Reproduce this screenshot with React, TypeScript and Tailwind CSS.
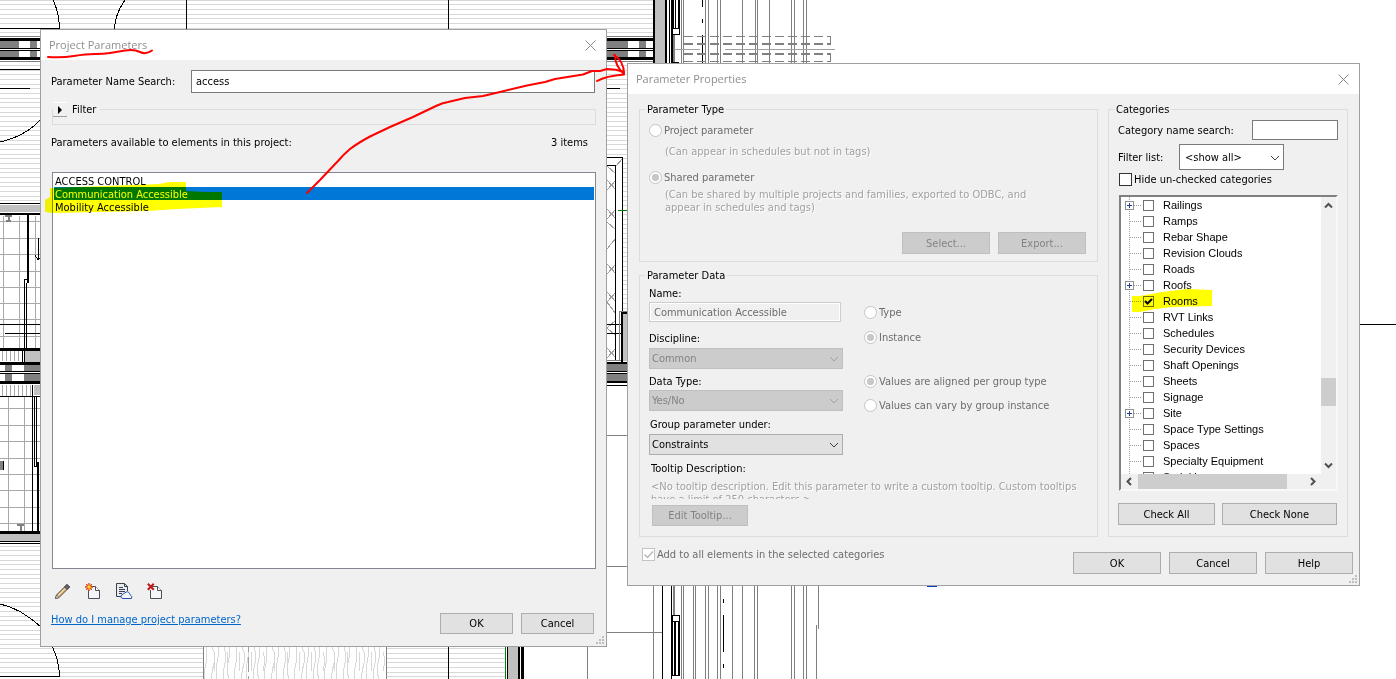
import React, { useState } from 'react';

const ui = 'font-["DejaVu_Sans_Condensed","DejaVu_Sans",sans-serif] text-[11px] leading-[13px] text-black';

const parameters = ['ACCESS CONTROL', 'Communication Accessible', 'Mobility Accessible'];

const categories = [
    { name: 'Railings', expandable: true },
    { name: 'Ramps' },
    { name: 'Rebar Shape' },
    { name: 'Revision Clouds' },
    { name: 'Roads' },
    { name: 'Roofs', expandable: true },
    { name: 'Rooms' },
    { name: 'RVT Links' },
    { name: 'Schedules' },
    { name: 'Security Devices' },
    { name: 'Shaft Openings' },
    { name: 'Sheets' },
    { name: 'Signage' },
    { name: 'Site', expandable: true },
    { name: 'Space Type Settings' },
    { name: 'Spaces' },
    { name: 'Specialty Equipment' },
    { name: 'Sprinklers' },
];

// evenly spaced board lines, 14px per three boards
const boards = (x1: number, x2: number, y1: number, y2: number) => {
    let d = '';
    for (let i = 0; i < 150; i++) {
        const y = Math.floor((i * 14) / 3);
        if (y >= y1 && y < y2) d += `M${x1} ${y}.5H${x2}`;
    }
    return d;
};

const vLines = (xs: number[], y1: number, y2: number) => xs.map(x => `M${x}.5 ${y1}V${y2}`).join('');
const hLines = (ys: number[], x1: number, x2: number) => ys.map(y => `M${x1} ${y}.5H${x2}`).join('');

const woodGrain = () => {
    let d = '';
    for (let x = 206; x < 384; x += 6) {
        const k = (x * 7) % 5;
        d += `M${x} 647q${k} 8 ${k - 2} 16t${1 - k} 16`;
        if (x % 4 === 0) d += `M${x + 3} 652q${3 - k} 8 0 19`;
    }
    return d;
};

const FloorPlan: React.FC = () => (
    <svg className="absolute inset-0 h-full w-full" shapeRendering="crispEdges" fill="none" aria-hidden="true">
        <g stroke="#d8d8d8">
            <path d={boards(0, 653, 0, 36)} />
            <path d={boards(0, 41, 63, 202)} />
            <path d={boards(607, 628, 63, 157)} />
            <path d={boards(623, 628, 157, 312)} />
            <path d={boards(0, 203, 545, 679)} />
            <path d={boards(387, 505, 646, 679)} />
            <path d={woodGrain()} />
        </g>
        <g stroke="#000">
            <path d="M53 0Q59 12 59.500 28M0 28.500H60M125 0Q115 14 114.500 29M186.500 0V29M448.500 0V29" />
            <path d="M0 69.500H41M0 88.500H30M607 88.500H620M0 142Q26 136 41 119" />
            <path d="M0 604Q20 608 41 627M52 646Q59 660 59.500 676M0 676.500H60M448.500 646V679" />
            <path d="M1360 324.500H1396" />
        </g>

        {/* upper wall */}
        <path d="M0 36.500H41M0 61.500H41M607 36.500H653M607 61.500H653" stroke="#808080" />
        <path d="M0 38h41v3H0zM0 57h41v3H0zM607 38h46v3h-46zM607 57h46v3h-46zM0 48h41v1H0zM0 50h41v1H0zM607 48h46v1h-46zM607 50h46v1h-46z" fill="#000" />
        <path d="M0 41h19v7H0zM0 51h19v6H0zM30 41h7v7h-7zM30 51h7v6h-7zM607 41h21v7h-21zM607 51h21v6h-21zM639 41h7v7h-7zM639 51h7v6h-7z" fill="#808080" />

        {/* tiled rooms */}
        <path d={hLines([221, 238, 254, 271, 287, 303, 319, 336], 0, 41) + vLines([3, 19, 35], 216, 348)} stroke="#a8a8a8" />
        <path d={hLines([408, 425, 441, 458, 474, 490, 507, 523], 0, 41) + vLines([8, 24], 397, 531)} stroke="#a8a8a8" />
        <path d="M0 205h41v7H0zM25 351h16v11H25zM34 385h7v10h-7zM0 534h41v7H0z" fill="#c0c0c0" />
        <path d="M0 203h41v1H0zM0 213h41v2H0zM27 215h2v68h-2zM0 348h41v3H0zM0 362h41v3H0zM0 371h41v1H0zM0 373h41v1H0zM0 381h41v3H0zM37 462h2v69h-2zM0 531h41v3H0zM0 541h41v1H0zM0 543h41v1H0z" fill="#000" />
        <path d="M5 365h7v6H5zM24 365h17v6H24zM5 374h7v7H5zM24 374h17v7H24zM0 461h4v9H0z" fill="#808080" />
        <path d={vLines([2, 6, 10, 14, 18], 351, 361) + vLines([2, 6, 10, 14, 18, 22, 26, 30], 385, 396)} stroke="#a8a8a8" />
        <path d="M24.500 348V279.500H27.500M26.500 283V348M22.500 351V362M24.500 351V362M32.500 385V531M34.500 396V466H36.500V396M0 396.500H41M0 324.500H41M5 333.500H41M38.500 238V260M35 255l3 5 3-3M3.500 461V470" stroke="#000" />
        <path d="M5 215.500H12M8.500 215V220M6 220.500H11M17 524.500H24M20.500 525V531" stroke="#808080" strokeWidth="2" />

        {/* shaft beside the dialogs */}
        <path d="M607 166l9 8M607 180l9 10 M616 180l-9 10M607 209l9 10M616 209l-9 10M607 222l9 8M616 238l-9 11M607 264l9 10M616 264l-9 10M607 292l9 10M616 292l-9 10M607 302l9 12M616 320l-9 8M607 348l9 10M616 348l-9 10M616 166l7-8M607 328l9 8" stroke="#a0a0a0" />
        <path d="M607 157.500H622.500V312M607 165.500H615.500V360M607 324.500H628M607 333.500H628" stroke="#000" />
        <path d="M618 210.500H628" stroke="#008000" />
        <path d="M623 314h5v47h-5z" fill="#c0c0c0" />
        <path d="M619.500 361V311.500H628M607 360.500H621" stroke="#808080" />
        <path d="M621 312h2v50h-2zM621 312h7v2h-7zM607 362h21v2h-21zM607 371h21v1h-21zM607 373h21v1h-21zM607 381h21v2h-21zM607 385h21v1h-21z" fill="#000" />
        <path d="M607 364h21v7h-21zM607 374h21v7h-21z" fill="#808080" />
        <path d="M607 435.500H628M607 566.500H628M607 632.500H662M587.500 646V679" stroke="#808080" />

        {/* exterior wall, top */}
        <path d="M655 0h10v64h-10z" fill="#c0c0c0" />
        <path d="M653 0h2v64h-2zM665 0h2v64h-2zM671 0h2v64h-2zM673 0h1v28h-1zM678 0h2v28h-2zM675 0h1v28h-1z" fill="#000" />
        <path d="M669.500 0V64M672.500 28.500H679.500V34.500H672.500zM672 62.500H679" stroke="#000" />
        <path d="M673 35h2v27h-2z" fill="#808080" />
        <path d={vLines([681, 683, 705, 708, 717, 720, 742, 755, 757, 769, 791, 794, 803, 806], 0, 64)} stroke="#808080" />
        <path d="M702.500 0V7M702.500 19V23M702.500 35V64" stroke="#000" />
        <path d="M684 36.500H831M684 61.500H831" stroke="#808080" strokeDasharray="9 4" />
        <path d="M684 44H831M684 54H831" stroke="#808080" strokeWidth="2" strokeDasharray="9 4" />
        <path d="M830.500 36V45M830.500 53V62" stroke="#808080" />
        <path d="M674 49.500H700M725 49.500H835" stroke="#a0a0a0" />

        {/* exterior wall, bottom */}
        <path d="M508 646h10v33h-10z" fill="#c0c0c0" />
        <path d="M507 646h1v33h-1zM518 646h2v33h-2zM521 646h3v33h-3z" fill="#000" />
        <path d="M505.500 646V679" stroke="#008000" />
        <path d={vLines([653, 681, 683, 693, 695, 705, 708, 717, 720, 732, 742, 754, 757, 791, 794, 803, 806], 585, 679)} stroke="#808080" />
        <path d="M818.500 585V629M816.500 625V679M386.500 646V679M203.500 646V679" stroke="#808080" />
        <path d="M248.500 646V652M248.500 657V672M248.500 676V679" stroke="#a0a0a0" />
        <path d="M662.500 585V679M671.500 585V679M723.500 599V603M723.500 615V652M723.500 664V668" stroke="#000" />
        <path d="M673 585h2v30h-2z" fill="#808080" />
        <path d="M672.500 615.500H679.500V621.500H672.500zM672 675.500H680" stroke="#000" />
        <path d="M672 621h1v54h-1zM674 621h2v54h-2zM678 621h2v54h-2z" fill="#000" />
        <path d="M920 585.500H944M927 586.500H937" stroke="#0040c0" />
    </svg>
);

const Chevron: React.FC<{ className?: string }> = ({ className }) => (
    <svg viewBox="0 0 10 6" className={className} fill="none" stroke="currentColor" aria-hidden="true">
        <path d="M1 1l4 4 4-4" />
    </svg>
);

const ScrollArrow: React.FC<{ d: string }> = ({ d }) => (
    <svg viewBox="0 0 9 9" className="h-[9px] w-[9px]" fill="none" stroke="#505050" strokeWidth="2" aria-hidden="true">
        <path d={d} />
    </svg>
);

const PushButton: React.FC<React.ButtonHTMLAttributes<HTMLButtonElement>> = ({ className = '', ...rest }) => (
    <button
        type="button"
        className={`border border-[#adadad] bg-[#e1e1e1] text-center disabled:border-[#bfbfbf] disabled:bg-[#cccccc] disabled:text-[#838383] ${className}`}
        {...rest}
    />
);

const RadioOption: React.FC<{ name: string; label: string; checked?: boolean }> = ({ name, label, checked }) => (
    <label className="flex h-4 items-center gap-[2px] text-[#6d6d6d]">
        <input
            type="radio"
            name={name}
            defaultChecked={checked}
            disabled
            className="h-[13px] w-[13px] appearance-none rounded-full border border-[#c4c4c4] bg-white checked:bg-[radial-gradient(circle_closest-side,#c8c8c8_62%,#fff_72%)]"
        />
        {label}
    </label>
);

const Combo: React.FC<{ id: string; value: string; disabled?: boolean }> = ({ id, value, disabled }) => (
    <div className="relative w-[194px]">
        <select
            id={id}
            disabled={disabled}
            className="block h-[21px] w-full appearance-none border border-[#adadad] bg-[#e1e1e1] pl-[2px] opacity-100 disabled:border-[#bfbfbf] disabled:bg-[#cccccc] disabled:text-[#838383]"
        >
            <option>{value}</option>
        </select>
        <Chevron className={`pointer-events-none absolute top-2 right-1 h-[6px] w-[10px] ${disabled ? 'text-[#a0a0a0]' : 'text-[#404040]'}`} />
    </div>
);

const SizeGrip: React.FC = () => (
    <svg viewBox="0 0 8 8" className="absolute right-[2px] bottom-[2px] h-2 w-2" fill="#bfbfbf" shapeRendering="crispEdges" aria-hidden="true">
        <path d="M6 0h2v2H6zM3 3h2v2H3zM6 3h2v2H6zM0 6h2v2H0zM3 6h2v2H3zM6 6h2v2H6z" />
    </svg>
);

const TitleBar: React.FC<{ title: string }> = ({ title }) => (
    <header className="flex h-[30px] items-center justify-between bg-white pr-[10px] pl-2">
        <h1 className='font-["Open_Sans",sans-serif] text-[11px] leading-4 text-[#8f8f8f]'>{title}</h1>
        <button type="button" aria-label="Close">
            <svg viewBox="0 0 11 11" className="block h-[11px] w-[11px]" stroke="#8c8c8c" fill="none">
                <path d="M.5.5l10 10M10.500.5l-10 10" />
            </svg>
        </button>
    </header>
);

const PageOutline = () => (
    <>
        <path d="M4.500 3.500H10.500L14.500 7.500V15.500H3.500V7" fill="#f4f5f8" stroke="#4a4f58" />
        <path d="M10.500 3.500V7.500H14.500" fill="#fff" stroke="#4a4f58" />
    </>
);

const ProjectParameters: React.FC = () => {
    const [selected, setSelected] = useState('Communication Accessible');

    return (
        <section className="absolute top-[29px] left-[40px] w-[567px] border border-[#a0a0a0] bg-[#f0f0f0]">
            <TitleBar title="Project Parameters" />
            <div className="px-[10px] pt-[10px] pb-3">
                <div className="flex items-center">
                    <label htmlFor="param-search" className="w-[140px]">Parameter Name Search:</label>
                    <input id="param-search" defaultValue="access" className="mr-px h-[23px] min-w-0 flex-1 border border-[#7a7a7a] bg-white px-1" />
                </div>

                <fieldset className="mt-[9px] ml-px h-[23px] border border-[#dcdcdc]">
                    <legend className="flex h-[15px] items-center gap-[5px] pr-1">
                        <button type="button" aria-label="Expand filter" className="flex h-[15px] w-[14px] items-center justify-center border-t border-b border-t-white border-b-[#a0a0a0]">
                            <svg viewBox="0 0 4 8" className="h-2 w-1"><path d="M0 0l4 4-4 4z" /></svg>
                        </button>
                        Filter
                    </legend>
                </fieldset>

                <div className="mt-[9px] flex h-4 items-center justify-between pr-2">
                    <span>Parameters available to elements in this project:</span>
                    <span>3 items</span>
                </div>

                <ul role="listbox" className="mt-[22px] ml-px h-[397px] border border-[#828790] bg-white p-px leading-[15px]">
                    {parameters.map(name => (
                        <li
                            key={name}
                            role="option"
                            aria-selected={name === selected}
                            onClick={() => setSelected(name)}
                            className={`h-[13px] pl-px ${name === selected ? 'bg-[#0078d7] text-white' : ''}`}
                        >
                            {name}
                        </li>
                    ))}
                </ul>

                <div className="mt-[13px] ml-[3px] flex h-[18px] gap-[14px]">
                    <button type="button" aria-label="Edit parameter">
                        <svg viewBox="0 0 17 17" className="h-[17px] w-[17px]">
                            <path d="M1.500 15.500l1-3.500L13 1.500l2.500 2.500L5 14.500z" fill="#dcb878" stroke="#4a4038" />
                            <path d="M13 1.500l2.500 2.500-2.500 2.500-2.500-2.500z" fill="#75646a" stroke="#44445a" />
                            <path d="M4 12.500L11 5.500" stroke="#fff0c8" />
                            <path d="M1.500 15.500l1-3.500 2.500 2.500z" fill="#f4f4f4" stroke="#5a5a5a" strokeWidth=".8" />
                        </svg>
                    </button>
                    <button type="button" aria-label="New parameter">
                        <svg viewBox="0 0 17 17" className="h-[17px] w-[17px]">
                            <PageOutline />
                            <path d="M4 0v8M0 4h8M1.200 1.200l5.600 5.600M6.800 1.200L1.200 6.800" stroke="#d84010" strokeWidth="1.300" />
                            <circle cx="4" cy="4" r="1.800" fill="#ffd820" />
                        </svg>
                    </button>
                    <button type="button" aria-label="Shared parameter">
                        <svg viewBox="0 0 17 17" className="h-[17px] w-[17px]">
                            <path d="M6 13.500H.5V.5H8.500L11.500 3.500V8" fill="#e8ebf0" stroke="#3c424c" />
                            <path d="M8.500.5V3.500H11.500M3 4.500H7M3 6.500H9M3 8.500H9M3 10.500H6" stroke="#3c424c" fill="none" />
                            <path d="M7 15.500a2 2 0 0 1 0-4 2 2 0 0 1 2-1.500 2.500 2.500 0 0 1 4.500.5q.5 1.500 1.500 2 1.500 1 .5 3z" fill="#f4f8ff" stroke="#2850c0" />
                        </svg>
                    </button>
                    <button type="button" aria-label="Delete parameter">
                        <svg viewBox="0 0 17 17" className="h-[17px] w-[17px]">
                            <PageOutline />
                            <path d="M.8.8l6 6M6.800.8l-6 6" stroke="#c01818" strokeWidth="2" />
                        </svg>
                    </button>
                </div>

                <footer className="mt-[13px] flex items-start justify-between pr-[2px]">
                    <a href="#help" className="text-[#0066cc] underline">How do I manage project parameters?</a>
                    <div className="flex gap-2">
                        <PushButton className="h-[21px] w-[73px]">OK</PushButton>
                        <PushButton className="h-[21px] w-[73px]">Cancel</PushButton>
                    </div>
                </footer>
            </div>
            <SizeGrip />
        </section>
    );
};

const CategoryTree: React.FC = () => {
    const [checked, setChecked] = useState<string[]>(['Rooms']);

    const toggle = (name: string) => {
        setChecked(list => (list.includes(name) ? list.filter(n => n !== name) : [...list, name]));
    };

    return (
        <div className="mt-[7px] flex h-[296px] flex-col border-2 border-t-[#808080] border-r-[#f8f8f8] border-b-[#f8f8f8] border-l-[#808080] bg-white">
            <div className="flex min-h-0 flex-1">
                <ul className='flex-1 overflow-hidden font-["Liberation_Sans",sans-serif]'>
                    {categories.map(({ name, expandable }) => (
                        <li key={name} className="flex h-4 items-center">
                            <span className="ml-1 flex h-4 w-[9px] items-center justify-center bg-[repeating-linear-gradient(180deg,#a0a0a0_0_1px,transparent_1px_2px)] bg-[length:1px_100%] bg-[position:4px_0] bg-no-repeat">
                                {expandable && (
                                    <button type="button" aria-label={`Expand ${name}`} className="h-[9px] w-[9px] bg-white">
                                        <svg viewBox="0 0 9 9" className="block h-[9px] w-[9px]" fill="none" shapeRendering="crispEdges">
                                            <path d="M.5.5h8v8h-8z" stroke="#919191" />
                                            <path d="M2 4.500h5M4.500 2v5" stroke="#2040a0" />
                                        </svg>
                                    </button>
                                )}
                            </span>
                            <span className={`h-px bg-[repeating-linear-gradient(90deg,#a0a0a0_0_1px,transparent_1px_2px)] ${expandable ? 'w-[7px]' : '-ml-1 w-[11px]'}`} />
                            <label className="ml-[2px] flex items-center gap-[9px] whitespace-nowrap">
                                <span className="grid">
                                    <input
                                        type="checkbox"
                                        checked={checked.includes(name)}
                                        onChange={() => toggle(name)}
                                        className="peer col-start-1 row-start-1 h-[11px] w-[11px] appearance-none border border-[#707070] bg-white"
                                    />
                                    <svg viewBox="0 0 11 11" className="pointer-events-none invisible col-start-1 row-start-1 h-[11px] w-[11px] peer-checked:visible" fill="none" stroke="#000" strokeWidth="2">
                                        <path d="M2 5l2.500 2.500L9 3" />
                                    </svg>
                                </span>
                                {name}
                            </label>
                        </li>
                    ))}
                </ul>
                <div className="flex w-[15px] flex-col items-center bg-[#f0f0f0]">
                    <button type="button" aria-label="Scroll up" className="flex h-[17px] items-center"><ScrollArrow d="M1 6.500l3.500-3.500L8 6.500" /></button>
                    <div className="mt-[164px] h-7 w-full bg-[#cdcdcd]" />
                    <button type="button" aria-label="Scroll down" className="mt-auto flex h-[17px] items-center"><ScrollArrow d="M1 2.500l3.500 3.500L8 2.500" /></button>
                </div>
            </div>
            <div className="flex h-[15px] items-center bg-[#f0f0f0]">
                <button type="button" aria-label="Scroll left" className="flex w-[17px] justify-center"><ScrollArrow d="M6 1L2.500 4.500 6 8" /></button>
                <div className="h-full w-[149px] bg-[#cdcdcd]" />
                <button type="button" aria-label="Scroll right" className="mr-[15px] ml-auto flex w-[17px] justify-center"><ScrollArrow d="M3 1l3.500 3.500L3 8" /></button>
            </div>
        </div>
    );
};

const ParameterProperties: React.FC = () => (
    <section className="absolute top-[63px] left-[627px] w-[733px] border border-[#a0a0a0] bg-[#f0f0f0]">
        <TitleBar title="Parameter Properties" />
        <div className="flex gap-[10px] px-[11px] pt-2">
            <div className="min-w-0 flex-1">
                <fieldset className="border border-[#dcdcdc] pr-[11px] pb-[7px] pl-[9px]">
                    <legend className="-ml-1 h-[14px] px-[2px] leading-[15px]">Parameter Type</legend>
                    <div className="pt-[6px]">
                        <RadioOption name="kind" label="Project parameter" />
                        <p className="mt-[6px] ml-4 h-[14px] leading-[15px] text-[#a0a0a0] [text-shadow:1px_1px_0_#fff]">(Can appear in schedules but not in tags)</p>
                    </div>
                    <div className="pt-[11px]">
                        <RadioOption name="kind" label="Shared parameter" checked />
                        <p className="mt-[3px] ml-4 w-[380px] text-[#a0a0a0] [text-shadow:1px_1px_0_#fff]">
                            (Can be shared by multiple projects and families, exported to ODBC, and appear in schedules and tags)
                        </p>
                    </div>
                    <div className="mt-[18px] flex justify-end gap-2">
                        <PushButton disabled className="h-[22px] w-[88px]">Select...</PushButton>
                        <PushButton disabled className="h-[22px] w-[88px]">Export...</PushButton>
                    </div>
                </fieldset>

                <fieldset className="mt-[6px] border border-[#dcdcdc] pb-[10px] pl-[9px]">
                    <legend className="-ml-1 h-[14px] px-[2px] leading-[15px]">Parameter Data</legend>
                    <div className="flex gap-[21px] pt-1">
                        <div className="w-[194px]">
                            <label htmlFor="name" className="block h-4 leading-[15px]">Name:</label>
                            <input id="name" disabled defaultValue="Communication Accessible" className="block h-5 w-48 border border-[#cccccc] bg-[#f0f0f0] px-1 text-[#6d6d6d] ring-1 ring-white ring-inset" />
                            <label htmlFor="discipline" className="mt-[9px] block h-[17px] leading-[15px]">Discipline:</label>
                            <Combo id="discipline" value="Common" disabled />
                            <label htmlFor="data-type" className="mt-[5px] block h-4 leading-[15px]">Data Type:</label>
                            <Combo id="data-type" value="Yes/No" disabled />
                            <label htmlFor="group" className="mt-[6px] block h-[17px] pl-px leading-[15px]">Group parameter under:</label>
                            <Combo id="group" value="Constraints" />
                        </div>
                        <div className="pt-[18px]">
                            <div className="flex flex-col gap-[9px]">
                                <RadioOption name="binding" label="Type" />
                                <RadioOption name="binding" label="Instance" checked />
                            </div>
                            <div className="mt-7 flex flex-col gap-2">
                                <RadioOption name="vary" label="Values are aligned per group type" checked />
                                <RadioOption name="vary" label="Values can vary by group instance" />
                            </div>
                        </div>
                    </div>
                    <div className="mt-[6px] pl-[2px]">
                        <h2 className="h-[19px] leading-[15px]">Tooltip Description:</h2>
                        <p className="h-[19px] overflow-hidden text-[#a0a0a0] [text-shadow:1px_1px_0_#fff]">
                            &lt;No tooltip description. Edit this parameter to write a custom tooltip. Custom tooltips have a limit of 250 characters.&gt;
                        </p>
                        <PushButton disabled className="mt-[6px] ml-px block h-[21px] w-24">Edit Tooltip...</PushButton>
                    </div>
                </fieldset>
            </div>

            <fieldset className="w-[240px] border border-[#dcdcdc] pr-[10px] pl-[9px]">
                <legend className="-ml-1 h-[14px] px-[2px] leading-[15px]">Categories</legend>
                <div className="-mr-px">
                    <div className="flex items-center justify-between pt-1">
                        <label htmlFor="category-search">Category name search:</label>
                        <input id="category-search" className="h-5 w-[86px] border border-[#7a7a7a] bg-white px-1" />
                    </div>
                    <div className="mt-1 flex items-center">
                        <label htmlFor="filter-list" className="w-[61px]">Filter list:</label>
                        <div className="relative w-[105px]">
                            <select id="filter-list" className="block h-[26px] w-full appearance-none border border-[#7a7a7a] bg-white pl-[5px]">
                                <option>&lt;show all&gt;</option>
                            </select>
                            <Chevron className="pointer-events-none absolute top-[11px] right-1 h-[6px] w-[10px] text-[#404040]" />
                        </div>
                    </div>
                    <div className="pl-px">
                        <label className="mt-px flex h-4 items-center gap-[2px]">
                            <input type="checkbox" className="h-[13px] w-[13px] appearance-none border border-[#333333] bg-white" />
                            Hide un-checked categories
                        </label>
                        <div className="pt-px">
                            <CategoryTree />
                        </div>
                    </div>
                </div>
                <div className="mt-3 flex gap-[7px]">
                    <PushButton className="h-[22px] w-[97px]">Check All</PushButton>
                    <PushButton className="h-[22px] flex-1">Check None</PushButton>
                </div>
            </fieldset>
        </div>

        <footer className="mt-[9px] flex items-start justify-between pr-[6px] pb-[11px] pl-[14px]">
            <label className="flex h-4 items-center gap-[2px] text-[#6d6d6d]">
                <span className="grid">
                    <input type="checkbox" disabled defaultChecked className="col-start-1 row-start-1 h-[13px] w-[13px] appearance-none border border-[#c4c4c4] bg-white" />
                    <svg viewBox="0 0 13 13" className="pointer-events-none col-start-1 row-start-1 h-[13px] w-[13px]" fill="none" stroke="#b8b8b8" strokeWidth="1.500">
                        <path d="M2.500 6.500l3 3 5.500-6" />
                    </svg>
                </span>
                Add to all elements in the selected categories
            </label>
            <div className="mt-[6px] flex gap-2">
                <PushButton className="h-[22px] w-[88px]">OK</PushButton>
                <PushButton className="h-[22px] w-[88px]">Cancel</PushButton>
                <PushButton className="h-[22px] w-[88px]">Help</PushButton>
            </div>
        </footer>
        <SizeGrip />
    </section>
);

// pen and marker strokes drawn over both dialogs
const Markup: React.FC = () => (
    <>
        <svg className="pointer-events-none absolute inset-0 h-full w-full mix-blend-multiply" fill="#ffff00" aria-hidden="true">
            <path d="M50 188L160 184 168 182H186V191L205 192H222V207L177 209 147 211 53 213 45 212V200L50 197z" />
            <path d="M1132 296H1140L1162 292 1187 289 1212 290V306L1173 307 1155 309 1140 312H1132z" />
        </svg>
        <svg className="pointer-events-none absolute inset-0 h-full w-full" fill="none" stroke="#f00" strokeWidth="2" strokeLinecap="round" strokeLinejoin="round" aria-hidden="true">
            <path d="M48 57Q62 58 74 56T95 54 110 53 125 50.500 140 52 152 50.500" />
            <path d="M307 193L320 180 338 161Q343 155 350 149 358 143 370 136.500L390 127 413 117 436 106Q442 103 448 102L465 98 483 96 500 92 527 85.500 545 82 555 79 583 74.500 592 71 600 71 607 69Q616 69 624 72" />
            <path d="M614 55Q624 61 624 74M615 55Q615 66 624 74M597 81Q606 76 624 74.500" />
        </svg>
    </>
);

const App: React.FC = () => (
    <main className={`relative isolate min-h-screen w-full overflow-hidden bg-white ${ui}`}>
        <FloorPlan />
        <ProjectParameters />
        <ParameterProperties />
        <Markup />
    </main>
);

export default App;
